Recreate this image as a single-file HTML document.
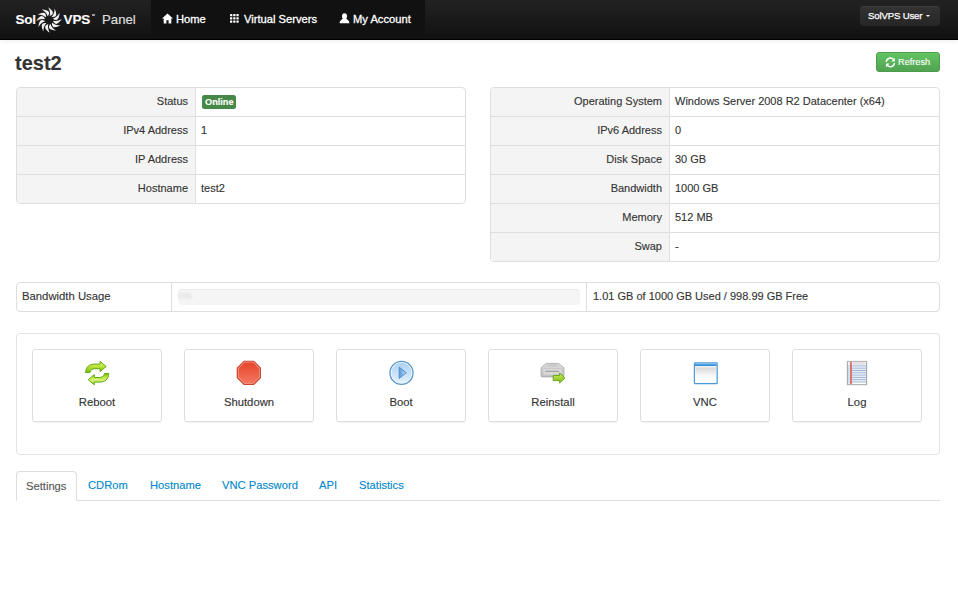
<!DOCTYPE html>
<html><head><meta charset="utf-8">
<style>
*{box-sizing:border-box;margin:0;padding:0}
html,body{width:958px;height:600px;overflow:hidden;background:#fff;font-family:"Liberation Sans",sans-serif;font-size:11px;line-height:20px;color:#333;-webkit-text-stroke-width:0.12px}
.abs{position:absolute}
#nav{position:absolute;left:0;top:0;width:958px;height:40px;background:linear-gradient(#222,#111);border-bottom:1px solid #000;box-shadow:0 1px 5px rgba(0,0,0,.08)}
#logo{position:absolute;left:15px;top:0;height:40px;color:#fff;font-size:13px}
.navact{position:absolute;left:151px;top:0;width:274px;height:39px;background:#111}
.nv{position:absolute;top:9px;color:#fff;font-size:11.2px;line-height:20px;text-shadow:0 -1px 0 rgba(0,0,0,.25);-webkit-text-stroke:0.3px #fff}
#user{position:absolute;left:860px;top:6px;width:80px;height:20px;border-radius:4px;background:linear-gradient(#333,#262626);box-shadow:inset 0 1px 0 rgba(255,255,255,.06);color:#fff;font-size:9.6px;line-height:20px;-webkit-text-stroke:0.25px #fff;letter-spacing:-0.15px}
h1{position:absolute;left:15px;top:48px;font-size:20px;line-height:30px;font-weight:bold;color:#333}
#refresh{position:absolute;left:876px;top:52px;width:64px;height:20px;border-radius:3px;background:linear-gradient(#62c462,#51a351);border:1px solid #4a9b4a;color:#fff;font-size:9.2px;line-height:18px}
table{border-collapse:separate;border-spacing:0;position:absolute;border:1px solid #dedede;border-radius:4px;table-layout:fixed}
td{border-top:1px solid #dedede;padding:3px 5px 5px;line-height:20px;height:29px;white-space:nowrap;vertical-align:middle}
tr:first-child td{border-top:0;height:28px}
td.l{background:#f4f4f4;text-align:right;border-right:1px solid #dedede;padding-right:7px}
tr:first-child td.l{border-top-left-radius:3px}
tr:last-child td.l{border-bottom-left-radius:3px}
.lbl{display:inline-block;background:#468847;color:#fff;font-weight:bold;font-size:9.2px;line-height:14px;height:14px;padding:0 2.5px 0 3px;border-radius:2.5px;vertical-align:top;margin-top:4px;margin-left:1px}
#well{position:absolute;left:16px;top:333px;width:924px;height:122px;border:1px solid #e3e3e3;border-radius:4px}
.box{position:absolute;top:349px;width:130px;height:73px;border:1px solid #dedede;border-radius:3px;box-shadow:0 1px 1px rgba(0,0,0,.05);text-align:center}
.box .t{position:absolute;left:0;right:0;top:41.5px;font-size:11.3px;line-height:20px;color:#333}
.box svg{position:absolute;left:52px;top:11px}
#tabs{position:absolute;left:16px;top:500px;width:924px;height:1px;background:#dedede}
.tab{position:absolute;top:475px;color:#0088cc;font-size:11.2px;line-height:20px}
#tabact{position:absolute;left:16px;top:471px;width:61px;height:30px;border:1px solid #dedede;border-bottom-color:#fff;border-radius:4px 4px 0 0;background:#fff;color:#555;padding-left:9px;line-height:28px;font-size:11.2px}
</style></head><body>
<div id="nav">
  <div class="navact"></div>
  <div id="logo">
    <span class="abs" style="left:0.5px;top:10px;font-weight:bold;line-height:20px;font-size:13.5px;letter-spacing:-0.2px">Sol</span>
    <svg class="abs" style="left:22.25px;top:7.5px;overflow:visible" width="24" height="24" viewBox="0 0 24 24"><g fill="#f0f0f0"><path d="M12.69 8.06 Q13.84 3.84 11.11 -0.77 Q19.82 5.2 12.69 8.06 Z"/><path transform="rotate(30 12 12)" d="M12.69 8.06 Q13.84 3.84 11.11 -0.77 Q19.82 5.2 12.69 8.06 Z"/><path transform="rotate(60 12 12)" d="M12.69 8.06 Q13.84 3.84 11.11 -0.77 Q19.82 5.2 12.69 8.06 Z"/><path transform="rotate(90 12 12)" d="M12.69 8.06 Q13.84 3.84 11.11 -0.77 Q19.82 5.2 12.69 8.06 Z"/><path transform="rotate(120 12 12)" d="M12.69 8.06 Q13.84 3.84 11.11 -0.77 Q19.82 5.2 12.69 8.06 Z"/><path transform="rotate(150 12 12)" d="M12.69 8.06 Q13.84 3.84 11.11 -0.77 Q19.82 5.2 12.69 8.06 Z"/><path transform="rotate(180 12 12)" d="M12.69 8.06 Q13.84 3.84 11.11 -0.77 Q19.82 5.2 12.69 8.06 Z"/><path transform="rotate(210 12 12)" d="M12.69 8.06 Q13.84 3.84 11.11 -0.77 Q19.82 5.2 12.69 8.06 Z"/><path transform="rotate(240 12 12)" d="M12.69 8.06 Q13.84 3.84 11.11 -0.77 Q19.82 5.2 12.69 8.06 Z"/><path transform="rotate(270 12 12)" d="M12.69 8.06 Q13.84 3.84 11.11 -0.77 Q19.82 5.2 12.69 8.06 Z"/><path transform="rotate(300 12 12)" d="M12.69 8.06 Q13.84 3.84 11.11 -0.77 Q19.82 5.2 12.69 8.06 Z"/><path transform="rotate(330 12 12)" d="M12.69 8.06 Q13.84 3.84 11.11 -0.77 Q19.82 5.2 12.69 8.06 Z"/></g></svg>
    <span class="abs" style="left:48.5px;top:10px;font-weight:bold;line-height:20px;font-size:13.5px;letter-spacing:-0.1px">VPS</span>
    <span class="abs" style="left:77.2px;top:14.1px;width:3px;height:1.8px;background:#9a9a9a"></span>
    <span class="abs" style="left:87px;top:10px;line-height:20px;font-size:13.2px;color:#e0e0e0">Panel</span>
  </div>
  <svg class="abs" style="left:162px;top:13px" width="11" height="11" viewBox="0 0 11 11"><path d="M5.5 0.5 L11 5.6 L9.3 5.6 L9.3 10.5 L6.6 10.5 L6.6 7.3 L4.4 7.3 L4.4 10.5 L1.7 10.5 L1.7 5.6 L0 5.6 Z" fill="#fff"/></svg>
  <span class="nv" style="left:176px">Home</span>
  <svg class="abs" style="left:230.3px;top:14.3px" width="9" height="9" viewBox="0 0 9 9"><g fill="#fff"><rect x="0.0" y="0.0" width="2.3" height="2.3" rx="0.4"/><rect x="3.2" y="0.0" width="2.3" height="2.3" rx="0.4"/><rect x="6.4" y="0.0" width="2.3" height="2.3" rx="0.4"/><rect x="0.0" y="3.2" width="2.3" height="2.3" rx="0.4"/><rect x="3.2" y="3.2" width="2.3" height="2.3" rx="0.4"/><rect x="6.4" y="3.2" width="2.3" height="2.3" rx="0.4"/><rect x="0.0" y="6.4" width="2.3" height="2.3" rx="0.4"/><rect x="3.2" y="6.4" width="2.3" height="2.3" rx="0.4"/><rect x="6.4" y="6.4" width="2.3" height="2.3" rx="0.4"/></g></svg>
  <span class="nv" style="left:244px">Virtual Servers</span>
  <svg class="abs" style="left:339px;top:13px" width="11" height="11" viewBox="0 0 11 11"><g fill="#fff"><ellipse cx="5.5" cy="3.2" rx="2.5" ry="2.9"/><path d="M3.9 5.6 L7.1 5.6 C8.6 7.2 10.4 7.6 10.4 10.2 L0.6 10.2 C0.6 7.6 2.4 7.2 3.9 5.6 Z"/></g></svg>
  <span class="nv" style="left:353px">My Account</span>
  <div id="user"><span class="abs" style="left:8px;top:0">SolVPS User</span><span class="abs" style="left:65.5px;top:8.5px;width:0;height:0;border-left:2px solid transparent;border-right:2px solid transparent;border-top:2.5px solid #fff"></span></div>
</div>

<h1>test2</h1>
<div id="refresh">
  <svg class="abs" style="left:7.5px;top:3.7px" width="11" height="11" viewBox="0 0 11 11"><path d="M1.3 5 A4.1 4.1 0 0 1 8.7 2.7" fill="none" stroke="#fff" stroke-width="1.4"/><path d="M9.5 6 A4.1 4.1 0 0 1 2.3 8.3" fill="none" stroke="#fff" stroke-width="1.4"/><path d="M9.8 0.8 L9.8 4.4 L6.2 4.4 Z" fill="#fff"/><path d="M1 10.2 L1 6.6 L4.6 6.6 Z" fill="#fff"/></svg>
  <span class="abs" style="left:21px;top:0">Refresh</span>
</div>

<table style="left:16px;top:87px;width:450px">
  <colgroup><col style="width:179px"><col></colgroup>
  <tr><td class="l">Status</td><td><span class="lbl">Online</span></td></tr>
  <tr><td class="l">IPv4 Address</td><td>1</td></tr>
  <tr><td class="l">IP Address</td><td></td></tr>
  <tr><td class="l">Hostname</td><td>test2</td></tr>
</table>

<table style="left:490px;top:87px;width:450px">
  <colgroup><col style="width:179px"><col></colgroup>
  <tr><td class="l">Operating System</td><td>Windows Server 2008 R2 Datacenter (x64)</td></tr>
  <tr><td class="l">IPv6 Address</td><td>0</td></tr>
  <tr><td class="l">Disk Space</td><td>30 GB</td></tr>
  <tr><td class="l">Bandwidth</td><td>1000 GB</td></tr>
  <tr><td class="l">Memory</td><td>512 MB</td></tr>
  <tr><td class="l">Swap</td><td>-</td></tr>
</table>

<table style="left:16px;top:282px;width:924px">
  <colgroup><col style="width:155px"><col style="width:415px"><col></colgroup>
  <tr><td style="border-right:1px solid #dedede;font-size:11.3px">Bandwidth Usage</td><td style="border-right:1px solid #dedede;padding:0 6px"><div style="height:16px;border-radius:4px;background:#f5f5f5;box-shadow:inset 0 1px 1px rgba(0,0,0,.04);position:relative"><span class="abs" style="left:0.5px;top:-2.8px;color:#fff;font-size:9.4px;-webkit-text-stroke-width:0;text-shadow:0 0 1px #aaa">0%</span></div></td><td style="padding-left:6px">1.01 GB of 1000 GB Used / 998.99 GB Free</td></tr>
</table>

<div id="well"></div>
<div class="box" style="left:32px"><svg style="left:52px;top:11px;overflow:visible" width="24" height="24" viewBox="0 0 24 24"><defs><linearGradient id="ga" x1="0" y1="0" x2="0" y2="1"><stop offset="0" stop-color="#e2f78e"/><stop offset="0.45" stop-color="#bde43c"/><stop offset="1" stop-color="#7cbd08"/></linearGradient><linearGradient id="ga2" x1="0" y1="0" x2="0" y2="1"><stop offset="0" stop-color="#7cbd08"/><stop offset="0.3" stop-color="#bde43c"/><stop offset="0.6" stop-color="#d6f27a"/><stop offset="1" stop-color="#8cc814"/></linearGradient></defs><g stroke="#5da20a" stroke-width="0.95" stroke-linejoin="round"><path fill="url(#ga)" d="M0.6 11.6 C1 5.8 4.4 3.1 9.6 3.1 L15.1 3.1 L15.1 0.4 L21.2 5.5 L15.1 10.6 L15.1 7.7 L9.8 7.7 C7 7.7 5.3 9.3 4.9 11.6 Z"/><path fill="url(#ga2)" d="M23.8 12.6 C23.4 18.4 20 21.1 14.8 21.1 L9.3 21.1 L9.3 23.8 L3.2 18.7 L9.3 13.6 L9.3 16.5 L14.6 16.5 C17.4 16.5 19.1 14.9 19.5 12.6 Z"/></g></svg><span class="t">Reboot</span></div>
<div class="box" style="left:184px"><svg style="left:52px;top:11px;overflow:visible" width="24" height="24" viewBox="0 0 24 24"><defs><linearGradient id="gs" x1="0" y1="0" x2="0" y2="1"><stop offset="0" stop-color="#e4462a"/><stop offset="1" stop-color="#f57560"/></linearGradient></defs><path d="M6.82 -0.30 L16.88 -0.30 L24.00 6.82 L24.00 16.88 L16.88 24.00 L6.82 24.00 L-0.30 16.88 L-0.30 6.82 Z" fill="#cf4430"/><path d="M7.34 0.85 L16.36 0.85 L22.75 7.24 L22.75 16.26 L16.36 22.65 L7.34 22.65 L0.95 16.26 L0.95 7.24 Z" fill="#f4a898"/><path d="M7.58 1.45 L16.12 1.45 L22.15 7.48 L22.15 16.02 L16.12 22.05 L7.58 22.05 L1.55 16.02 L1.55 7.48 Z" fill="url(#gs)"/></svg><span class="t">Shutdown</span></div>
<div class="box" style="left:336px"><svg style="left:52px;top:11px;overflow:visible" width="24" height="24" viewBox="0 0 24 24"><defs><linearGradient id="gb" x1="0" y1="0" x2="0" y2="1"><stop offset="0" stop-color="#aed1f2"/><stop offset="1" stop-color="#e2f1fd"/></linearGradient><linearGradient id="gt" x1="0" y1="0" x2="1" y2="0"><stop offset="0" stop-color="#5796d6"/><stop offset="1" stop-color="#c4e0f7"/></linearGradient></defs><circle cx="12.5" cy="11.9" r="11.55" fill="#f1f8fe" stroke="#5b97ce" stroke-width="1.3"/><circle cx="12.5" cy="11.9" r="10.1" fill="url(#gb)"/><path d="M10.2 6.1 L17.4 11.8 L10.2 17.4 Z" fill="url(#gt)" stroke="#4a8bcf" stroke-width="0.9" stroke-linejoin="round"/></svg><span class="t">Boot</span></div>
<div class="box" style="left:488px"><svg style="left:52px;top:11px;overflow:visible" width="24" height="24" viewBox="0 0 24 24"><defs><linearGradient id="gd" x1="0" y1="0" x2="0" y2="1"><stop offset="0" stop-color="#e2e2e2"/><stop offset="1" stop-color="#bdbdbd"/></linearGradient><linearGradient id="gr" x1="0" y1="0" x2="0" y2="1"><stop offset="0" stop-color="#cdee5e"/><stop offset="1" stop-color="#7dbb16"/></linearGradient></defs><path d="M5.3 2.4 L17.7 2.4 L22.9 6.8 L22.9 14.9 Q22.9 15.9 21.9 15.9 L1.1 15.9 Q0.1 15.9 0.1 14.9 L0.1 6.6 Z" fill="url(#gd)" stroke="#a3a3a3" stroke-width="0.8"/><path d="M6 3.1 L17 3.1 L21.2 6.6 L1.8 6.6 Z" fill="#d3d3d3"/><path d="M7.5 3.8 L15.5 3.8 L16.3 5.3 L6.7 5.3 Z" fill="#c6c6c6"/><rect x="1.9" y="7.6" width="19.2" height="6.6" rx="0.8" fill="#d9d9d9" stroke="#bdbdbd" stroke-width="0.6"/><rect x="4.2" y="9.8" width="13.8" height="1.1" rx="0.5" fill="#a2a2a2"/><path d="M12.2 14.4 L18.6 14.4 L18.6 12 L23.9 17 L18.6 22 L18.6 19.6 L12.2 19.6 Z" fill="url(#gr)" stroke="#5e9e10" stroke-width="0.9" stroke-linejoin="round"/></svg><span class="t">Reinstall</span></div>
<div class="box" style="left:640px"><svg style="left:52px;top:11px;overflow:visible" width="24" height="24" viewBox="0 0 24 24"><defs><linearGradient id="gw" x1="0" y1="0" x2="0" y2="1"><stop offset="0" stop-color="#d8d9da"/><stop offset="0.55" stop-color="#f9f9f9"/><stop offset="1" stop-color="#fff"/></linearGradient><linearGradient id="gtb" x1="0" y1="0" x2="0" y2="1"><stop offset="0" stop-color="#68b2ea"/><stop offset="1" stop-color="#2684d6"/></linearGradient></defs><rect x="0.8" y="1.3" width="24" height="22" rx="1.3" fill="#4f9ad6"/><rect x="2" y="2.5" width="21.5" height="19.4" fill="#fff"/><rect x="2" y="2.5" width="21.5" height="2.6" fill="url(#gtb)"/><rect x="2.4" y="5.9" width="20.7" height="0.6" fill="#f2dccc"/><rect x="2.4" y="6.5" width="20.7" height="15" fill="url(#gw)"/></svg><span class="t">VNC</span></div>
<div class="box" style="left:792px"><svg style="left:52px;top:11px;overflow:visible" width="24" height="24" viewBox="0 0 24 24"><rect x="1.6" y="-0.2" width="20.8" height="24.6" fill="#dadada"/><rect x="2" y="0.2" width="20" height="23.8" fill="#acacac"/><rect x="3" y="1.1" width="18" height="22" fill="#fdfdfd"/><rect x="7.5" y="1.4" width="13" height="2.3" fill="#dedede"/><g fill="#e6edf6"><rect x="3" y="5.35" width="18" height="1.3"/><rect x="3" y="7.65" width="18" height="1.3"/><rect x="3" y="9.95" width="18" height="1.3"/><rect x="3" y="12.25" width="18" height="1.3"/><rect x="3" y="14.55" width="18" height="1.3"/><rect x="3" y="16.85" width="18" height="1.3"/><rect x="3" y="19.15" width="18" height="1.3"/></g><g fill="#9bb3d4"><rect x="3" y="4.40" width="18" height="0.95"/><rect x="3" y="6.70" width="18" height="0.95"/><rect x="3" y="9.00" width="18" height="0.95"/><rect x="3" y="11.30" width="18" height="0.95"/><rect x="3" y="13.60" width="18" height="0.95"/><rect x="3" y="15.90" width="18" height="0.95"/><rect x="3" y="18.20" width="18" height="0.95"/><rect x="3" y="20.50" width="18" height="0.95"/></g><rect x="3.8" y="1.1" width="1.2" height="22" fill="#cfe8f4"/><rect x="5.1" y="1.1" width="1.8" height="22" fill="#e06a64"/></svg><span class="t">Log</span></div>

<div id="tabs"></div>
<div id="tabact">Settings</div>
<span class="tab" style="left:88px">CDRom</span>
<span class="tab" style="left:150px">Hostname</span>
<span class="tab" style="left:222px">VNC Password</span>
<span class="tab" style="left:319px">API</span>
<span class="tab" style="left:359px">Statistics</span>
</body></html>
